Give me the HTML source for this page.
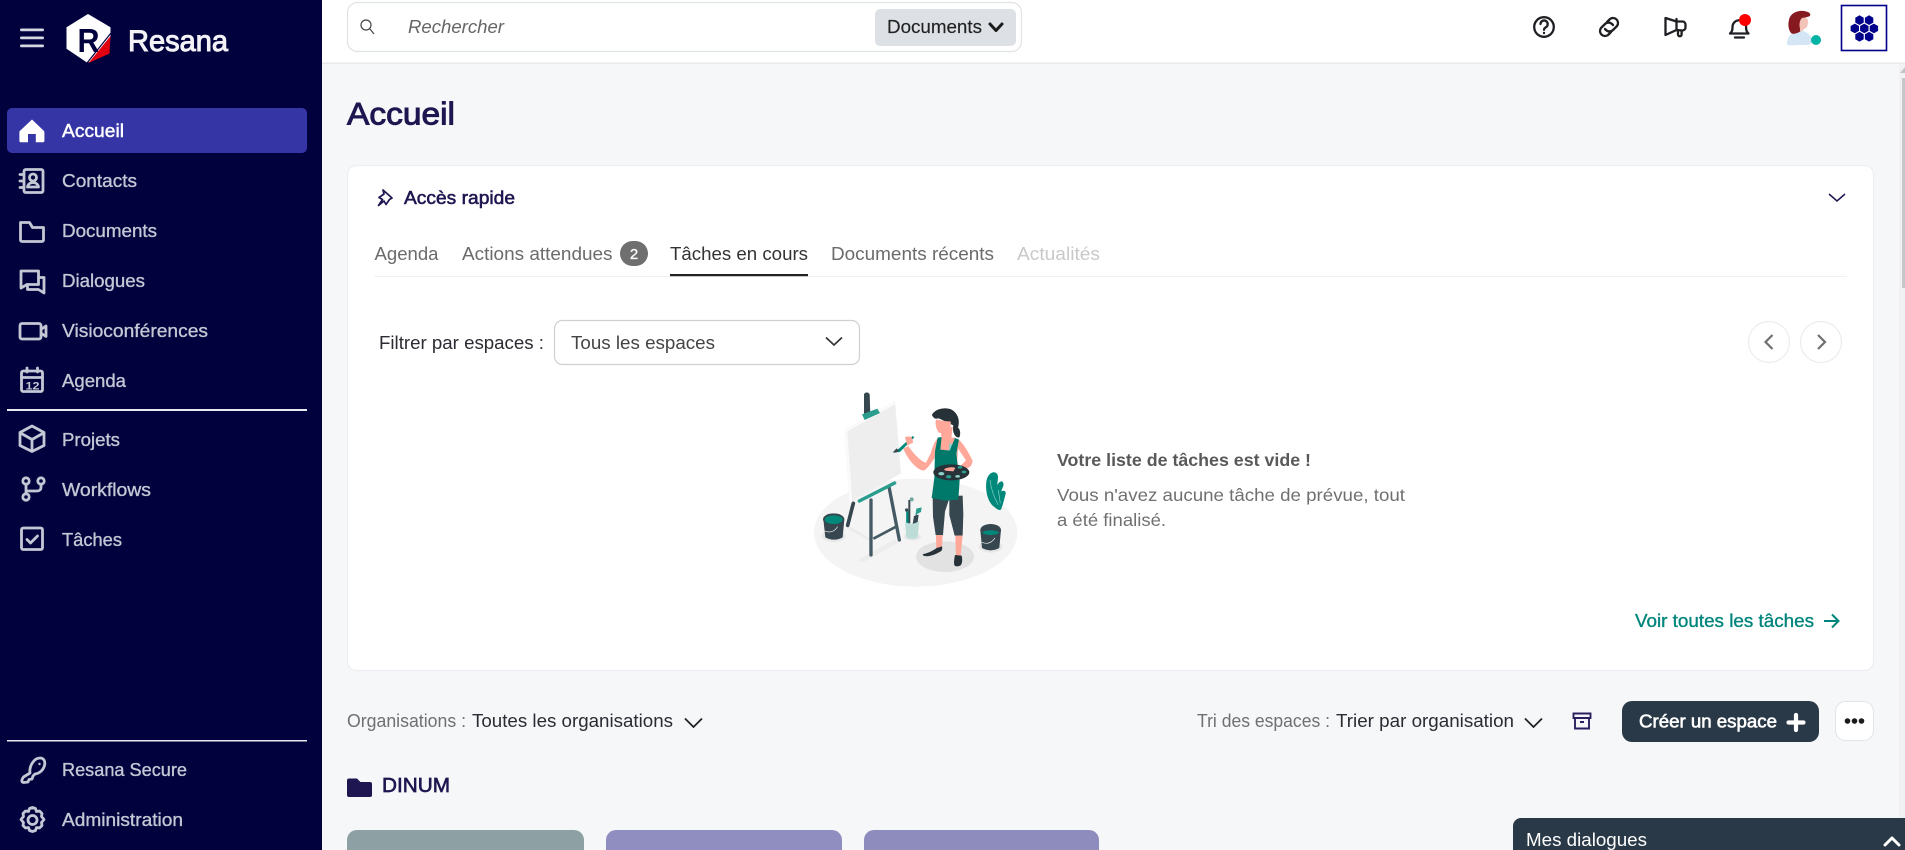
<!DOCTYPE html>
<html lang="fr">
<head>
<meta charset="utf-8">
<title>Resana - Accueil</title>
<style>
html,body{margin:0;padding:0;width:1905px;height:850px;overflow:hidden;background:#f6f7f9}
svg{display:block;position:absolute;left:0;top:0}
text{font-family:"Liberation Sans",sans-serif;white-space:pre}
.nav{font-size:18.4px;fill:#c4c7d4;stroke:#c4c7d4;stroke-width:.35}
.ic{fill:none;stroke:#c4c7d4;stroke-width:2.8;stroke-linecap:round;stroke-linejoin:round}
.tb{fill:none;stroke:#1f1f24;stroke-width:2.3;stroke-linecap:round;stroke-linejoin:round}
.tab{font-size:18.2px;fill:#6b6b6b}
.g{font-size:18.2px;fill:#707070}
.d{font-size:18.2px;fill:#2b2b33}
</style>
</head>
<body>
<svg width="1905" height="850" viewBox="0 0 1905 850" xmlns="http://www.w3.org/2000/svg">
<!-- page -->
<rect width="1905" height="850" fill="#f6f7f9"/>
<!-- header -->
<rect x="322" width="1583" height="63" fill="#fff"/>
<rect x="322" y="62.5" width="1583" height="1.5" fill="#e6e8ec"/>
<rect x="347.5" y="2.5" width="674" height="49" rx="10" fill="#fff" stroke="#dfe2e6" stroke-width="1.2"/>
<circle cx="366" cy="25" r="5" fill="none" stroke="#444" stroke-width="1.2"/><path d="M370 29l4 5" stroke="#444" stroke-width="1.2" fill="none"/>
<text x="408" y="33" font-size="18.2" font-style="italic" fill="#666" textLength="96" lengthAdjust="spacingAndGlyphs">Rechercher</text>
<rect x="875" y="9" width="141" height="37" rx="5" fill="#dde1e5"/>
<text x="887" y="33" font-size="18.2" fill="#222" stroke="#222" stroke-width=".15" textLength="95" lengthAdjust="spacingAndGlyphs">Documents</text>
<path d="M990 24l6 6.500 6-6.500" fill="none" stroke="#1b1b1b" stroke-width="3" stroke-linecap="round" stroke-linejoin="round"/>

<!-- top icons -->
<circle cx="1544" cy="27" r="9.800" class="tb"/>
<path d="M1540.500 24a3.600 3.600 0 1 1 5.400 3.200c-1.200.7-1.900 1.300-1.900 2.600" class="tb" stroke-width="2"/>
<circle cx="1544" cy="33" r="1.200" fill="#1f1f24"/>
<path d="M1607 22l3-3a5 5 0 0 1 7 7l-4 4a5 5 0 0 1-7 0l-1-1" class="tb"/>
<path d="M1611 32l-3 3a5 5 0 0 1-7-7l4-4a5 5 0 0 1 7 0l1 1" class="tb"/>
<path d="M1665.500 18v17l11-5 6 .5a3 3 0 0 0 3-3v-3a3 3 0 0 0-3-3h-6z" class="tb"/>
<path d="M1676.500 19v11M1678 31v3.500a1.800 1.800 0 0 0 3.600 0V31" class="tb"/>
<path d="M1730 33.500c2-1.800 2.500-3 2.500-6.500a6.800 6.800 0 0 1 13.600 0c0 3.500.5 4.700 2.400 6.500z" class="tb"/>
<path d="M1735 37.500h9" class="tb"/>
<circle cx="1745" cy="20" r="6" fill="#f00"/>
<!-- avatar -->
<path d="M1787 44c0-7 4-11 9-12l8-1c5 3 8 5 8 11 0 3-5 3-12 3s-13 1-13-1z" fill="#d4e5f5"/>
<path d="M1789 20c1-7 9-10 15-9 5 1 7 2 6 5-2 1-5 1-6 3-1 6 0 9-2 11-3 3-9 5-11 3-3-4-3-9-2-13z" fill="#86191f"/>
<path d="M1802 18c3-1 6 0 6 3 0 3-.5 6-2 7s-3 1-3 3h-3c0-2 0-3-.5-5 0-4 .5-6 2.500-8z" fill="#f3c3b8"/>
<circle cx="1816" cy="40" r="5" fill="#00b3a4"/>
<!-- hex logo -->
<rect x="1841.500" y="5.500" width="45" height="45" fill="#fff" stroke="#00008b" stroke-width="1.600"/>
<g fill="#00008b">
<path d="M1859.500 15.300l4.200 2.400v4.900l-4.200 2.400-4.200-2.400v-4.900z"/>
<path d="M1869.100 15.300l4.200 2.400v4.900l-4.200 2.400-4.200-2.400v-4.900z"/>
<path d="M1854.800 23.600l4.200 2.400v4.900l-4.200 2.400-4.200-2.400V26z"/>
<path d="M1864.300 23.600l4.200 2.400v4.900l-4.200 2.400-4.200-2.400V26z"/>
<path d="M1873.900 23.600l4.200 2.400v4.900l-4.200 2.400-4.200-2.400V26z"/>
<path d="M1859.500 31.900l4.200 2.400v4.900l-4.200 2.400-4.200-2.400v-4.900z"/>
<path d="M1869.100 31.900l4.200 2.400v4.900l-4.200 2.400-4.200-2.400v-4.900z"/>
</g>

<!-- sidebar -->
<rect width="322" height="850" fill="#01013e"/>
<rect x="20" y="28.500" width="24" height="2.800" rx="1.400" fill="#d5d7e0"/>
<rect x="20" y="36.500" width="24" height="2.800" rx="1.400" fill="#d5d7e0"/>
<rect x="20" y="44.500" width="24" height="2.800" rx="1.400" fill="#d5d7e0"/>
<path d="M88 14.500l22 13v10l-20 24-3 .5-20-13.500v-21z" fill="#fff" stroke="#fff" stroke-linejoin="round"/>
<text x="77.500" y="52" font-size="33" font-weight="700" fill="#01013e" textLength="22" lengthAdjust="spacingAndGlyphs">R</text>
<path d="M110.500 36l-22 27 21-9.500z" fill="#e10010"/>
<path d="M111 33l-24 30" stroke="#01013e" stroke-width="1.200" fill="none"/>
<text x="128" y="51" font-size="30" fill="#f3f3f7" stroke="#f3f3f7" stroke-width="1" textLength="100" lengthAdjust="spacingAndGlyphs">Resana</text>

<rect x="7" y="108" width="300" height="45" rx="5" fill="#3535a5"/>
<path d="M32 119.500l12 11.500c.4.400.4 1 .4 1.500v8.500c0 .8-.6 1.200-1.200 1.200h-7.400v-8.200h-7.800v8.200h-7.400c-.7 0-1.200-.5-1.200-1.200v-8.500c0-.5 0-1.100.4-1.500z" fill="#fff"/>
<text x="62" y="137" font-size="18.400" fill="#fff" stroke="#fff" stroke-width=".45" textLength="62" lengthAdjust="spacingAndGlyphs">Accueil</text>

<!-- contacts -->
<rect x="24" y="169.500" width="19" height="23" rx="1.800" class="ic"/>
<path d="M20 174.500h3.500M20 181h3.500M20 187.500h3.500" class="ic"/>
<circle cx="33" cy="177.500" r="3.500" class="ic" stroke-width="2.200"/><path d="M27.500 187c.5-3 3-4.500 5.500-4.500s5 1.500 5.500 4.500z" class="ic" stroke-width="2.200"/>
<text class="nav" x="62" y="187" textLength="75" lengthAdjust="spacingAndGlyphs">Contacts</text>
<!-- documents -->
<path d="M20.500 222.500h9l3 5h11v12.500a1.500 1.500 0 0 1-1.500 1.500h-20a1.500 1.500 0 0 1-1.500-1.500z" class="ic"/>
<text class="nav" x="62" y="237" textLength="95" lengthAdjust="spacingAndGlyphs">Documents</text>
<!-- dialogues -->
<path d="M21 271h17.500v13.500H27l-6 3.500z" class="ic"/>
<path d="M38.500 277.500H44V293l-5.500-3.500H27.500v-5" class="ic"/>
<text class="nav" x="62" y="287" textLength="83" lengthAdjust="spacingAndGlyphs">Dialogues</text>
<!-- visio -->
<rect x="20" y="323.500" width="21" height="15.500" rx="2" class="ic"/>
<path d="M41.500 329l4.500-3v10.500l-4.500-3" class="ic"/>
<text class="nav" x="62" y="337" textLength="146" lengthAdjust="spacingAndGlyphs">Visioconférences</text>
<!-- agenda -->
<rect x="21.500" y="371" width="21" height="20.500" rx="1.800" class="ic"/>
<path d="M21.500 377.500h21M27 368v4M37.500 368v4" class="ic"/>
<text x="25.500" y="389.500" font-size="11" font-weight="700" fill="#c4c7d4" textLength="14" lengthAdjust="spacingAndGlyphs">12</text>
<text class="nav" x="62" y="387" textLength="64" lengthAdjust="spacingAndGlyphs">Agenda</text>
<rect x="7" y="409" width="300" height="2" fill="#e8e9f0"/>
<!-- projets -->
<path d="M32 426l12 6.500v13L32 451.500l-12-6v-13zM20.500 433L32 439.500 43.500 433M32 439.500V451" class="ic"/>
<text class="nav" x="62" y="446" textLength="58" lengthAdjust="spacingAndGlyphs">Projets</text>
<!-- workflows -->
<circle cx="26" cy="481" r="3.200" class="ic" stroke-width="2.200"/><circle cx="41" cy="481" r="3.200" class="ic" stroke-width="2.200"/><circle cx="26" cy="497" r="3.200" class="ic" stroke-width="2.200"/>
<path d="M26 484.500v9M26 491h11c2.500 0 4-1.500 4-3.500v-3" class="ic" stroke-width="2.200"/>
<text class="nav" x="62" y="496" textLength="89" lengthAdjust="spacingAndGlyphs">Workflows</text>
<!-- taches -->
<rect x="21.500" y="528" width="21" height="21.500" rx="1.800" class="ic"/>
<path d="M27 539.500l3.500 3.500 7-7" class="ic" stroke-width="2.200"/>
<text class="nav" x="62" y="546" textLength="60" lengthAdjust="spacingAndGlyphs">Tâches</text>

<rect x="7" y="740" width="300" height="1.500" fill="#e8e9f0"/>
<!-- key -->
<path d="M30 773c-1-7 4-15 10-15 4 0 5.500 3.500 4.500 7.500-1.200 4.500-5 8-9.500 8.500l-2 2-1 3-3 .5-1 2.500-4 .5c-1.500.2-2.500-.8-2-2.500.5-1.500.5-2 1.500-3z" class="ic" stroke-width="2.200"/>
<circle cx="39.500" cy="764" r="1.200" fill="#c4c7d4"/>
<text class="nav" x="62" y="776" textLength="125" lengthAdjust="spacingAndGlyphs">Resana Secure</text>
<!-- gear -->
<circle cx="32.500" cy="820" r="4.500" class="ic" stroke-width="2.200"/>
<path d="M29.500 808.500l3-1 3 1 1 3 3-.5 2.500 2.500-.5 3 2.500 3-2.500 3 .5 3-2.500 2.500-3-.5-1 3-3 1-3-1-1-3-3 .5-2.500-2.500.5-3-2.500-3 2.500-3-.5-3 2.500-2.500 3 .5z" class="ic" stroke-width="2.200"/>
<text class="nav" x="62" y="826" textLength="121" lengthAdjust="spacingAndGlyphs">Administration</text>

<!-- title -->
<text x="347" y="124.500" font-size="31.500" fill="#1e1650" stroke="#1e1650" stroke-width=".95" textLength="108" lengthAdjust="spacingAndGlyphs">Accueil</text>

<!-- card -->
<rect x="347.500" y="165.500" width="1526" height="505" rx="9" fill="#fff" stroke="#eceef1" stroke-width="1.200"/>
<path d="M383 190l9 8-2.500 1.500-3.500 5-2-3.500-5.500 4.500 4-6-3.500-2 5-3.500z" fill="none" stroke="#1e1650" stroke-width="1.700" stroke-linejoin="round"/>
<text x="404" y="204" font-size="18.200" fill="#1e1650" stroke="#1e1650" stroke-width=".55" textLength="111" lengthAdjust="spacingAndGlyphs">Accès rapide</text>
<path d="M1829 194l8 7 8-7" fill="none" stroke="#1e1650" stroke-width="1.500"/>

<text class="tab" x="374.500" y="260" textLength="64" lengthAdjust="spacingAndGlyphs">Agenda</text>
<text class="tab" x="462" y="260" textLength="150.500" lengthAdjust="spacingAndGlyphs">Actions attendues</text>
<rect x="620" y="241" width="28" height="25" rx="12.500" fill="#6f6f6f"/>
<text x="634" y="259" font-size="15" fill="#fff" text-anchor="middle" stroke="#fff" stroke-width=".3">2</text>
<text class="tab" x="670" y="260" style="fill:#333" textLength="138" lengthAdjust="spacingAndGlyphs">Tâches en cours</text>
<text class="tab" x="831" y="260" textLength="163" lengthAdjust="spacingAndGlyphs">Documents récents</text>
<text class="tab" x="1017" y="260" style="fill:#c9c9c9" textLength="83" lengthAdjust="spacingAndGlyphs">Actualités</text>
<rect x="374" y="276" width="1473" height="1" fill="#f0f0f2"/>
<rect x="670" y="274" width="138" height="2.200" fill="#222"/>

<text class="d" x="379" y="349" textLength="165" lengthAdjust="spacingAndGlyphs">Filtrer par espaces :</text>
<rect x="554.500" y="320.500" width="305" height="44" rx="8" fill="#fff" stroke="#cfcfd4" stroke-width="1.200"/>
<text class="d" x="571" y="349" style="fill:#444" textLength="144" lengthAdjust="spacingAndGlyphs">Tous les espaces</text>
<path d="M826 337.500l8 7.500 8-7.500" fill="none" stroke="#333" stroke-width="1.700"/>
<circle cx="1769" cy="342" r="20.500" fill="#fff" stroke="#ececee" stroke-width="1.200"/>
<circle cx="1821" cy="342" r="20.500" fill="#fff" stroke="#ececee" stroke-width="1.200"/>
<path d="M1772.500 335l-7 7 7 7" fill="none" stroke="#6f6f6f" stroke-width="2.200"/>
<path d="M1818 335l7 7-7 7" fill="none" stroke="#6f6f6f" stroke-width="2.200"/>

<!-- illustration -->
<g transform="translate(790 380) scale(.3333)">
<ellipse cx="377" cy="458" rx="305" ry="162" fill="#f4f4f4"/>
<ellipse cx="465" cy="530" rx="87" ry="46" fill="#e2e2e2"/>
<ellipse cx="131" cy="468" rx="36" ry="18" fill="#e8e8e8"/>
<ellipse cx="602" cy="500" rx="36" ry="18" fill="#e8e8e8"/>
<ellipse cx="367" cy="470" rx="26" ry="12" fill="#e8e8e8"/>
<path d="M175 437l70 40 0 10-70-40zM203 540l110-62 12 10-108 60z" fill="#ececec"/>
<path d="M190 370l-17 66" stroke="#37474f" stroke-width="11" stroke-linecap="round"/>
<path d="M222 42q8-10 17 0l2 62h-19z" fill="#37474f"/>
<path d="M163 150L315 63l18 217-155 88z" fill="#eeeeee"/>
<path d="M163 150L315 63l8 5L172 155l15 210-9 3z" fill="#fafafa"/>
<path d="M216 103l46-17 8 13-46 21z" fill="#2a9d8f"/>
<path d="M243 360v165" stroke="#455a64" stroke-width="10" stroke-linecap="round"/>
<path d="M297 320l31 160" stroke="#455a64" stroke-width="10" stroke-linecap="round"/>
<path d="M250 476l68-36" stroke="#455a64" stroke-width="8"/>
<path d="M208 363l106-54" stroke="#2a9d8f" stroke-width="10" stroke-linecap="round"/>
<!-- bucket left -->
<path d="M100 418h63l-5 54q-26 14-52 0z" fill="#37474f"/>
<ellipse cx="131" cy="418" rx="32" ry="18" fill="#37474f"/>
<ellipse cx="131" cy="419" rx="27" ry="13" fill="#00897b"/>
<path d="M103 453q25 10 40-13" stroke="#eee" stroke-width="2" fill="none"/>
<!-- bucket right -->
<path d="M571 450h62l-5 54q-26 14-52 0z" fill="#37474f"/>
<ellipse cx="602" cy="450" rx="31" ry="18" fill="#37474f"/>
<ellipse cx="602" cy="458" rx="24" ry="7" fill="#00897b"/>
<path d="M575 487q25 10 40-13" stroke="#eee" stroke-width="2" fill="none"/>
<!-- plant -->
<path d="M612 380c-18-12-28-50-22-80 5-20 20-28 30-20 8 8 2 22 2 35 6-12 16-14 18-6 3 8-4 15-6 25 8-4 15 0 13 8-4 14-8 32-14 47-5 4-15-3-21-9z" fill="#00897b"/>
<path d="M600 300q5 40 25 75M625 330l6 40" stroke="#8fd0c9" stroke-width="2" fill="none"/>
<!-- cup -->
<path d="M358 430v-70" stroke="#37474f" stroke-width="6"/><circle cx="365" cy="358" r="6" fill="#6fa8a0"/>
<path d="M352 432v-38" stroke="#00897b" stroke-width="7"/><circle cx="350" cy="390" r="5" fill="#37474f"/>
<path d="M373 432l6-46 16-4-2 14-12 6-2 32z" fill="#2a9d8f"/>
<path d="M368 432l4-24 14-4-4 30z" fill="#37474f"/>
<path d="M345 425q22 14 43-3l-5 50q-17 10-34 0z" fill="#bcdcd8"/>
<!-- woman legs -->
<path d="M428 350l1 60 8 55h22l6-70 13-40 0 50 16 62h24l2-65-2-55z" fill="#37474f"/>
<path d="M438 465h20l-2 40-17 5zM496 467h22l-6 60h-14z" fill="#ffa799"/>
<path d="M400 522c15-3 30-10 40-18l16-5c2 8 0 13-5 16-15 9-35 16-48 13-5-2-6-5-3-6zM495 525l20 2c3 12 2 25-4 30-8 3-16 3-18-2-2-8 0-20 2-30z" fill="#263238"/>
<!-- torso -->
<path d="M445 175l50-2 10 30-5 60h-50l-4-45z" fill="#ffa799"/>
<path d="M478 190l24 5-4 60-26-5z" fill="#8fd0c9"/>
<path d="M500 175c15 5 38 45 48 68-2 15-10 22-22 22l-18-4 20-20-28-42z" fill="#ffa799"/>
<path d="M445 172c-10 10-17 28-23 48l-14 28c-15-3-40-30-53-50l-15 8c12 30 40 65 62 66 15-10 30-35 44-58z" fill="#ffa799"/>
<path d="M435 215l8-42 12-2-4 38 28 3 16-38 12 5-8 42 10 80-4 58-40 3-40-8 8-60z" fill="#00796b"/>
<ellipse cx="484" cy="277" rx="54" ry="24" fill="#263238"/>
<ellipse cx="454" cy="281" rx="9" ry="5" fill="#8fd0c9"/><ellipse cx="476" cy="290" rx="8" ry="5" fill="#2a9d8f"/><ellipse cx="503" cy="289" rx="7" ry="4" fill="#8fd0c9"/><ellipse cx="522" cy="276" rx="7" ry="4" fill="#2a9d8f"/><ellipse cx="510" cy="262" rx="7" ry="4" fill="#2a9d8f"/>
<path d="M462 268c10-6 25-8 34-4l-6 10-24-2z" fill="#ffa799"/>
<!-- head -->
<path d="M426 105c8-18 42-26 62-14 18 12 22 34 16 52 8 6 8 22 4 29-6 2-13-3-16-11-4-10-3-18-2-25z" fill="#263238"/>
<path d="M488 140l-4 35-28 5-4-25z" fill="#ffa799"/>
<path d="M438 118c-3 13 0 27 8 39 8 5 20 3 30-3 6-10 8-20 6-30-12 0-30-2-44-6z" fill="#ffa799"/>
<path d="M426 105c8-18 42-26 62-14 5 3 8 20 2 34-6-2-8-6-10-12-8 2-25 2-42 3-5 0-10-6-12-11z" fill="#263238"/>
<path d="M320 212l48-44 5 4-42 43c-4 3-9 2-11-3z" fill="#00897b"/>
<path d="M308 217l12-12 8 8-10 5z" fill="#37474f"/>
<path d="M345 172c5-4 15-4 20 0l5 15-18 10z" fill="#ffa799"/>
</g>

<text x="1057" y="466" font-size="17.500" font-weight="700" fill="#595959" textLength="254" lengthAdjust="spacingAndGlyphs">Votre liste de tâches est vide !</text>
<text x="1057" y="501" font-size="17.800" fill="#707070" textLength="348" lengthAdjust="spacingAndGlyphs">Vous n'avez aucune tâche de prévue, tout</text>
<text x="1057" y="526" font-size="17.800" fill="#707070" textLength="109" lengthAdjust="spacingAndGlyphs">a été finalisé.</text>

<text x="1635" y="627" font-size="18.200" fill="#00857c" stroke="#00857c" stroke-width=".35" textLength="179" lengthAdjust="spacingAndGlyphs">Voir toutes les tâches</text>
<path d="M1824 621h14M1832 614.500l6.500 6.500-6.500 6.500" fill="none" stroke="#00857c" stroke-width="2"/>

<!-- filters row -->
<text class="g" x="347" y="727" textLength="119" lengthAdjust="spacingAndGlyphs">Organisations :</text>
<text class="d" x="472" y="727" textLength="201" lengthAdjust="spacingAndGlyphs">Toutes les organisations</text>
<path d="M685 718.500l8.500 8.500 8.500-8.500" fill="none" stroke="#222" stroke-width="1.800"/>
<text class="g" x="1197" y="727" textLength="133" lengthAdjust="spacingAndGlyphs">Tri des espaces :</text>
<text class="d" x="1336" y="727" textLength="178" lengthAdjust="spacingAndGlyphs">Trier par organisation</text>
<path d="M1525 718.500l8.500 8.500 8.500-8.500" fill="none" stroke="#222" stroke-width="1.800"/>
<path d="M1573.500 713.500h17v4.500h-17zM1575 718v10.500h14V718M1580 722h4" fill="none" stroke="#2a1f5e" stroke-width="1.900"/>
<rect x="1622" y="701" width="197" height="41" rx="10" fill="#2a3947"/>
<text x="1639" y="727.500" font-size="18.200" fill="#fff" stroke="#fff" stroke-width=".6" textLength="138" lengthAdjust="spacingAndGlyphs">Créer un espace</text>
<path d="M1796 715v15M1788.500 722.500h15" stroke="#fff" stroke-width="4.200" stroke-linecap="round"/>
<rect x="1835.500" y="701.500" width="38" height="39" rx="10" fill="#fff" stroke="#e2e4e8"/>
<circle cx="1847.500" cy="721" r="2.800" fill="#1b1b1b"/><circle cx="1854.500" cy="721" r="2.800" fill="#1b1b1b"/><circle cx="1861.500" cy="721" r="2.800" fill="#1b1b1b"/>

<!-- DINUM -->
<path d="M347 780.500a2 2 0 0 1 2-2h8l3.500 3.500h9.500a2 2 0 0 1 2 2v11a2 2 0 0 1-2 2h-21a2 2 0 0 1-2-2z" fill="#1e1650"/>
<text x="382" y="792" font-size="20.500" fill="#1e1650" stroke="#1e1650" stroke-width=".65" textLength="68" lengthAdjust="spacingAndGlyphs">DINUM</text>
<path d="M347 850v-10a10 10 0 0 1 10-10h217a10 10 0 0 1 10 10v10z" fill="#8da0a4"/>
<path d="M606 850v-10a10 10 0 0 1 10-10h216a10 10 0 0 1 10 10v10z" fill="#908ec0"/>
<path d="M864 850v-10a10 10 0 0 1 10-10h215a10 10 0 0 1 10 10v10z" fill="#8e8cbc"/>

<!-- scrollbar -->
<rect x="1899" y="64" width="6" height="786" fill="#f1f1f3"/>
<path d="M1905 67l-5 6h5z" fill="#c4c4c6"/>
<rect x="1902" y="78" width="3" height="210" fill="#c6c6c8"/>

<!-- dialogues panel -->
<path d="M1513 850v-24a8 8 0 0 1 8-8h384v32z" fill="#2a3947"/>
<text x="1526" y="846" font-size="18.500" fill="#fff" textLength="121" lengthAdjust="spacingAndGlyphs">Mes dialogues</text>
<path d="M1885 845l7-7 7 7" fill="none" stroke="#fff" stroke-width="3" stroke-linecap="round" stroke-linejoin="round"/>
</svg>
</body>
</html>
